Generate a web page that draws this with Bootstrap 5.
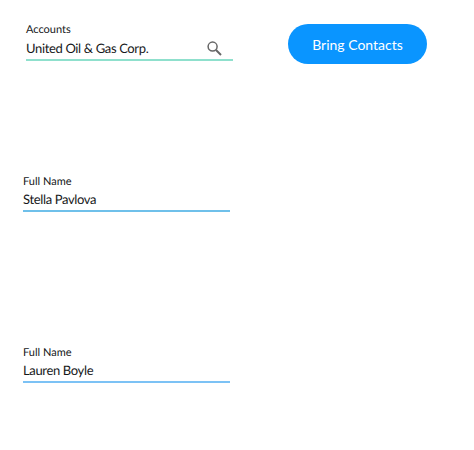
<!DOCTYPE html>
<html><head><meta charset="utf-8">
<link href="https://cdn.jsdelivr.net/npm/bootstrap@5.3.0/dist/css/bootstrap.min.css" rel="stylesheet">
<style>
html,body{margin:0;background:#fff;}
body{font-family:Lato,"Liberation Sans",sans-serif;color:#16181a;height:450px;overflow:hidden;text-rendering:geometricPrecision;}
.toprow{padding:24px 47px 0 26px;height:174px;}
.acc{width:207px;height:37px;border-bottom:2px solid #8fe0cd;}
.lbl{font-size:11px;line-height:13px;}
.val{font-size:13px;line-height:20px;letter-spacing:-.35px;}
.ppl{width:207px;margin-left:23px;height:38px;border-bottom:2px solid #6fc0ea;}
.lower{border-bottom-color:#7cc2f5;}
.bring{width:139px;height:40px;background:#0a95ff;color:#fff;border:0;border-radius:20px;font-size:14px;padding:0;}
.bring:hover{background:#0a95ff;color:#fff;}
.gapper{height:133px}
.acc .lbl{margin-top:-1px;}
.acc .val{margin-top:2px;}
.ppl .lbl{padding-top:1px;}
.ppl .val{margin-top:1px;}
.svgicon{margin-right:11px;}
</style></head><body>
<div class="toprow d-flex justify-content-between">
<div class="acc">
<div class="lbl">Accounts</div>
<div class="d-flex justify-content-between align-items-center val"><span>United Oil &amp; Gas Corp.</span>
<svg width="15" height="15" viewBox="0 0 15 15" class="svgicon"><circle cx="5.6" cy="5.6" r="4.5" fill="none" stroke="#666" stroke-width="1.5"/><path d="M9 9l5 5" stroke="#666" stroke-width="2"/></svg></div>
</div>
<button class="btn bring">Bring Contacts</button>
</div>
<div class="ppl"><div class="lbl">Full Name</div><div class="val">Stella Pavlova</div></div>
<div class="gapper"></div>
<div class="ppl lower"><div class="lbl">Full Name</div><div class="val">Lauren Boyle</div></div>
</body></html>
